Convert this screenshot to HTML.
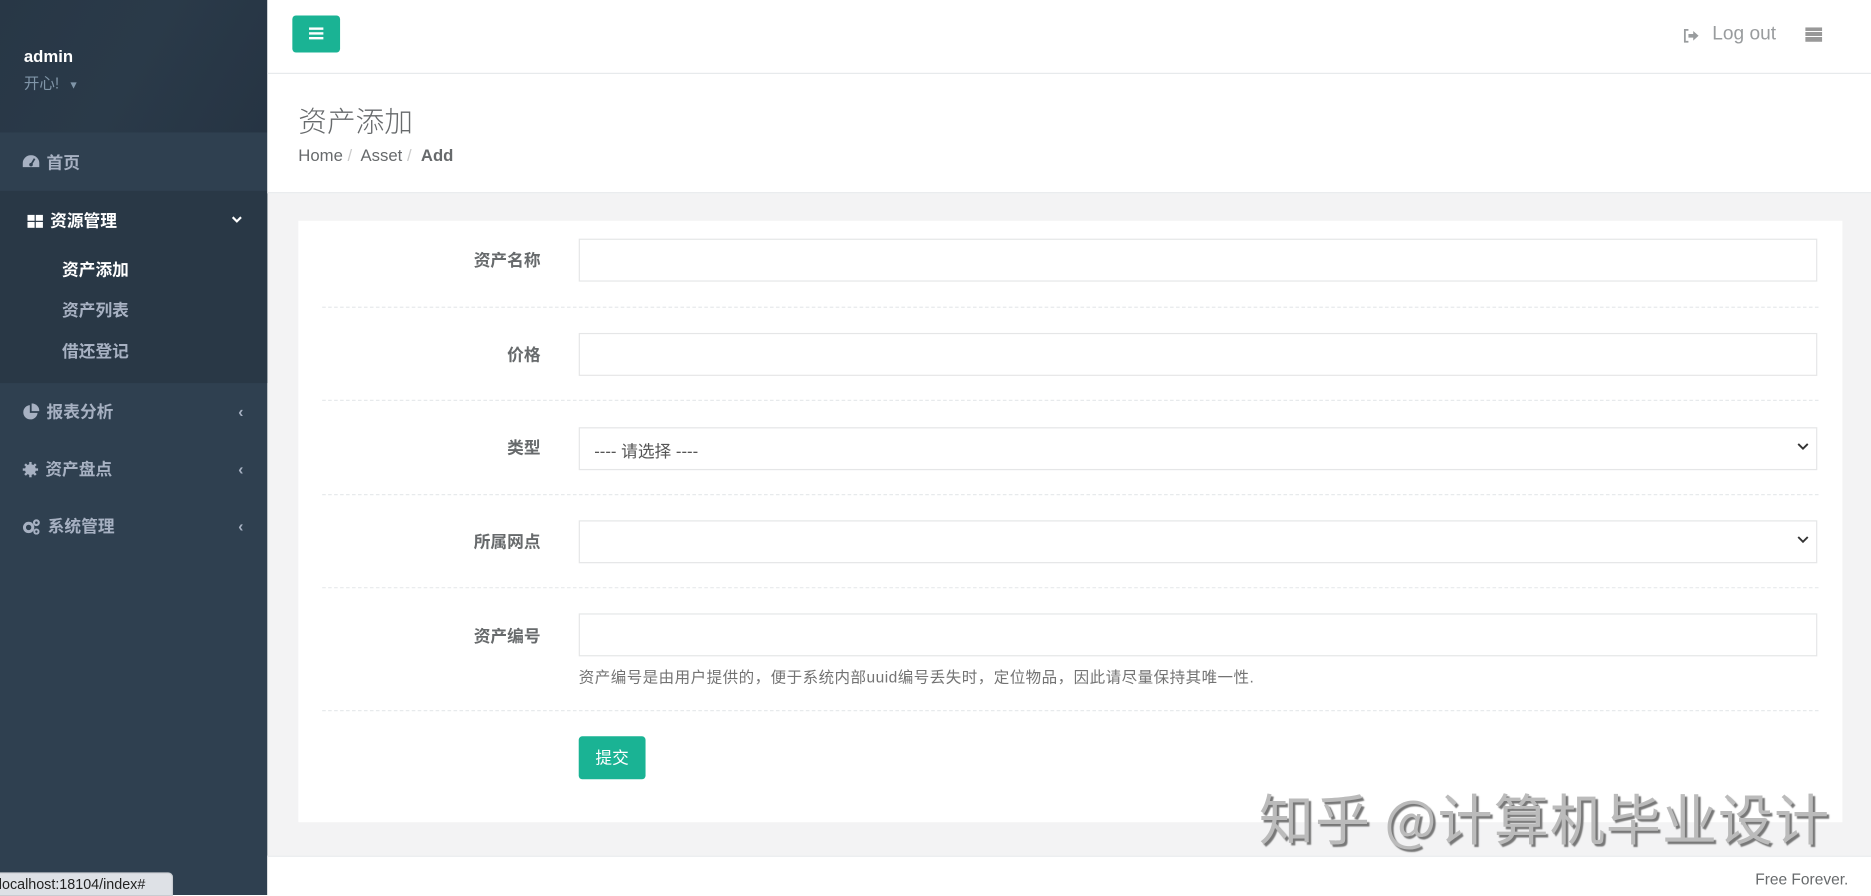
<!DOCTYPE html>
<html><head><meta charset="utf-8"><style>
*{box-sizing:border-box;margin:0;padding:0}
html,body{width:1871px;height:895px;overflow:hidden;background:#fff}
#w{position:absolute;left:0;top:0;width:1568px;height:750px;transform:scale(1.19324,1.19333);transform-origin:0 0;font-family:"Liberation Sans","Noto Sans CJK SC",sans-serif;font-size:13px;color:#676a6c;background:#f3f3f4}
.sb{position:absolute;left:0;top:0;width:224px;height:750px;background:#2f4050}
.prof{position:absolute;left:0;top:0;width:224px;height:111px;background:linear-gradient(120deg,#283746 0%,#2a3a49 50%,#263443 100%)}
.ni{position:absolute;left:0;width:224px;color:#a7b1c2;font-weight:bold;font-size:14px}
.ni .t{position:absolute;top:50%;transform:translateY(-50%);display:flex;align-items:center;gap:6px}
.arr{position:absolute;right:20px;top:50%;transform:translateY(-50%);font-size:13px}
.top{position:absolute;left:224px;top:0;width:1344px;height:62px;background:#fff;border-bottom:1px solid #e7eaec}
.ph{position:absolute;left:224px;top:62px;width:1344px;height:100px;background:#fff;border-bottom:1px solid #e7eaec}
.card{position:absolute;left:250px;top:185px;width:1294px;height:504px;background:#fff}
.lab{position:absolute;right:1091px;font-weight:bold;font-size:14px;color:#676a6c}
.inp{position:absolute;left:235px;width:1038px;height:36px;border:1px solid #e5e6e7;background:#fff}
.sep{position:absolute;left:20px;width:1254px;border-top:1px dashed #e7eaec}
.foot{position:absolute;left:224px;top:717px;width:1344px;height:33px;background:#fff;border-top:1px solid #e7eaec}
.chev{position:absolute;right:6px;top:12px}
</style></head><body><div id="w">
<div class="sb">
 <div class="prof">
  <div style="position:absolute;left:20px;top:39px;color:#fff;font-weight:bold;font-size:14px">admin</div>
  <div style="position:absolute;left:20px;top:59px;color:#8095a8;font-size:13px">开心! <span style="font-size:9px;margin-left:4px">▼</span></div>
 </div>
 <div class="ni" style="top:111px;height:49px;background:#2f4050"><span class="t" style="left:19px"><svg width="14" height="12" viewBox="0 0 14 12"><path d="M7 0A7 7 0 0 0 0 7v3h14V7A7 7 0 0 0 7 0z" fill="#a7b1c2"/><path d="M7 8L10 3" stroke="#2f4050" stroke-width="1.5"/><circle cx="7" cy="8" r="1.5" fill="#2f4050"/></svg>首页</span></div>
 <div class="ni" style="top:160px;height:161px;background:#293846">
  <div style="position:absolute;left:23px;top:15px;color:#fff;display:flex;align-items:center;gap:6px">
   <svg width="13" height="11" viewBox="0 0 13 11"><rect x="0" y="0" width="6" height="5" fill="#fff"/><rect x="7" y="0" width="6" height="5" fill="#fff"/><rect x="0" y="6" width="6" height="5" fill="#fff"/><rect x="7" y="6" width="6" height="5" fill="#fff"/></svg>资源管理</div>
  <svg style="position:absolute;right:21px;top:21px" width="9" height="6" viewBox="0 0 9 6"><path d="M1 1l3.5 3.5L8 1" stroke="#fff" stroke-width="1.8" fill="none"/></svg>
  <div style="position:absolute;left:52px;top:56px;color:#fff">资产添加</div>
  <div style="position:absolute;left:52px;top:90px">资产列表</div>
  <div style="position:absolute;left:52px;top:124px">借还登记</div>
 </div>
 <div class="ni" style="top:321px;height:48px"><span class="t" style="left:19px"><svg width="14" height="14" viewBox="0 0 14 14"><path d="M6 1.5A6 6 0 1 0 12.5 8H6z" fill="#a7b1c2"/><path d="M7.5 0v6.5H14A6.5 6.5 0 0 0 7.5 0z" fill="#a7b1c2"/></svg>报表分析</span><span class="arr">‹</span></div>
 <div class="ni" style="top:369px;height:48px"><span class="t" style="left:19px"><svg width="13" height="13" viewBox="0 0 13 13"><circle cx="6.5" cy="6.5" r="4.5" fill="#a7b1c2"/><g stroke="#a7b1c2" stroke-width="2"><path d="M6.5 0v13M0 6.5h13M2 2l9 9M11 2l-9 9"/></g></svg>资产盘点</span><span class="arr">‹</span></div>
 <div class="ni" style="top:417px;height:48px"><span class="t" style="left:19px"><svg width="15" height="13" viewBox="0 0 15 13"><circle cx="5" cy="7" r="3.5" fill="none" stroke="#a7b1c2" stroke-width="2.5"/><circle cx="11.5" cy="3" r="2" fill="none" stroke="#a7b1c2" stroke-width="1.8"/><circle cx="11.5" cy="10.5" r="1.8" fill="none" stroke="#a7b1c2" stroke-width="1.6"/></svg>系统管理</span><span class="arr">‹</span></div>
</div>
<div class="top">
 <div style="position:absolute;left:21px;top:13px;width:40px;height:31px;background:#1ab394;border-radius:3px">
  <div style="position:absolute;left:14px;top:10px;width:12px;height:2px;background:#fff;box-shadow:0 4px 0 #fff,0 8px 0 #fff"></div></div>
 <svg style="position:absolute;left:1187px;top:24px" width="13" height="12" viewBox="0 0 13 12"><path d="M4 1H1v10h3" stroke="#999c9e" stroke-width="1.5" fill="none"/><path d="M4 4.5h4V2l4.5 4L8 10V7.5H4z" fill="#999c9e"/></svg>
 <div style="position:absolute;left:1211px;top:20px;font-size:16px;color:#999c9e">Log out</div>
 <div style="position:absolute;left:1289px;top:23px;width:14px;height:12px;background:linear-gradient(#999 3px,#fff 3px,#fff 4px,#999 4px,#999 7px,#fff 7px,#fff 8px,#999 8px)"></div>
</div>
<div class="ph">
 <div style="position:absolute;left:26px;top:20px;font-size:24px;font-weight:300;color:#676a6c">资产添加</div>
 <div style="position:absolute;left:26px;top:60px;font-size:14px;color:#676a6c">Home <span style="color:#ccc">/</span>&nbsp; Asset <span style="color:#ccc">/</span>&nbsp; <b>Add</b></div>
</div>
<div class="card">
 <div class="lab" style="top:23px">资产名称</div><div class="inp" style="top:15px"></div><div class="sep" style="top:72px"></div>
 <div class="lab" style="top:102px">价格</div><div class="inp" style="top:94px"></div><div class="sep" style="top:150px"></div>
 <div class="lab" style="top:180px">类型</div><div class="inp" style="top:173px"><span style="position:absolute;left:12px;top:9px;font-size:14px;color:#555">---- 请选择 ----</span><svg class="chev" width="10" height="7" viewBox="0 0 10 7"><path d="M1 1l4 4 4-4" stroke="#333" stroke-width="1.6" fill="none"/></svg></div><div class="sep" style="top:229px"></div>
 <div class="lab" style="top:259px">所属网点</div><div class="inp" style="top:251px"><svg class="chev" width="10" height="7" viewBox="0 0 10 7"><path d="M1 1l4 4 4-4" stroke="#333" stroke-width="1.6" fill="none"/></svg></div><div class="sep" style="top:307px"></div>
 <div class="lab" style="top:338px">资产编号</div><div class="inp" style="top:329px"></div>
 <div style="position:absolute;left:235px;top:372px;font-size:13px;color:#737373;letter-spacing:0.4px">资产编号是由用户提供的，便于系统内部uuid编号丢失时，定位物品，因此请尽量保持其唯一性.</div>
 <div class="sep" style="top:410px"></div>
 <div style="position:absolute;left:235px;top:432px;width:56px;height:36px;background:#1ab394;border-radius:3px;color:#fff;font-size:14px;text-align:center;line-height:36px">提交</div>
</div>
<div style="position:absolute;left:1055px;top:652px;font-size:46px;color:#bbb;text-shadow:2px 2px 1px #777;letter-spacing:1px;font-family:'Noto Sans CJK SC',sans-serif;white-space:nowrap">知乎 @计算机毕业设计</div>
<div class="foot"><div style="position:absolute;right:19px;top:11px;font-size:13px;color:#676a6c">Free Forever.</div></div>
<div style="position:absolute;left:-4px;top:731px;width:149px;height:20px;background:#dee1e6;border:1px solid #c9ccd1;border-radius:0 4px 0 0;font-size:12px;color:#222;padding:2px 0 0 2px">localhost:18104/index#</div>
</div></body></html>
